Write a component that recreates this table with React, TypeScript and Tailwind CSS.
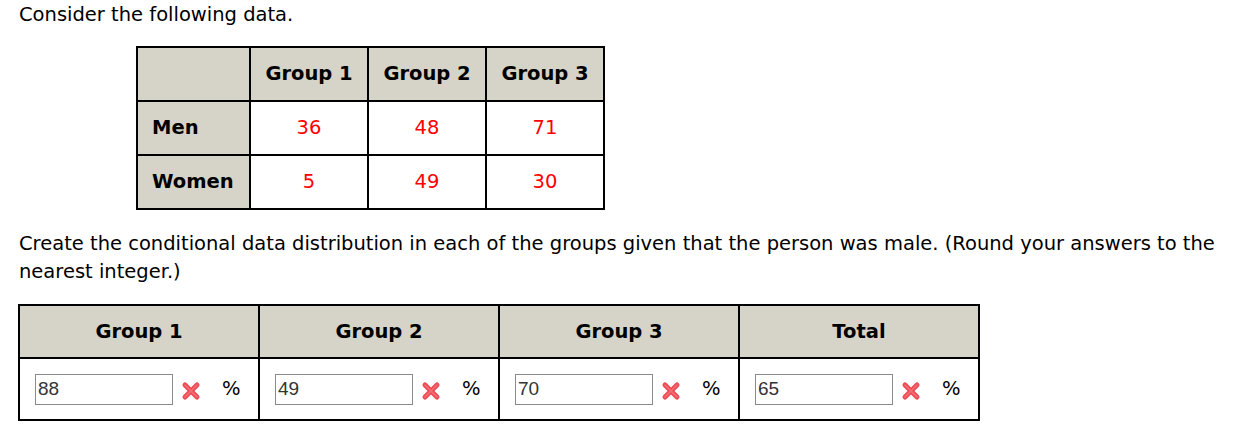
import React from "react";

const Cross = () => (
  <svg width="20" height="20" viewBox="0 0 20 20" className="shrink-0">
    <path d="M4 4 L16 16 M16 4 L4 16" stroke="#ee4b55" strokeWidth="5" strokeLinecap="round" />
    <path d="M4 4 L16 16 M16 4 L4 16" stroke="#f98a90" strokeWidth="1.5" strokeLinecap="round" opacity="0.6" />
  </svg>
);

const AnswerCell = ({ value }: { value: string }) => (
  <td className="border-2 border-black h-[62px] pl-[15px]">
    <div className="flex items-center">
      <input
        readOnly
        value={value}
        className="w-[138px] h-[31px] border border-[#8a8a8a] px-[2px] text-[19px] text-[#333] font-['Liberation_Sans',Arial,sans-serif] outline-none"
      />
      <span className="ml-[8px] mt-[4px]"><Cross /></span>
      <span className="ml-[21px] text-black">%</span>
    </div>
  </td>
);

export default function App() {
  const head = "bg-[#d6d3c9] border-2 border-black font-bold";
  const cell = "border-2 border-black text-center text-[#ff0000]";
  return (
    <div className="w-[1236px] h-[439px] bg-white text-black font-['DejaVu_Sans',Verdana,sans-serif] text-[19.5px] pl-[19px] pt-[1px]">
      <p className="leading-[28px]">Consider the following data.</p>
      <table className="ml-[117px] mt-[17px] border-collapse">
        <tbody>
          <tr className="h-[54px]">
            <td className={head + " w-[113px]"}></td>
            <td className={head + " w-[118px] text-center"}>Group 1</td>
            <td className={head + " w-[118px] text-center"}>Group 2</td>
            <td className={head + " w-[118px] text-center"}>Group 3</td>
          </tr>
          <tr className="h-[54px]">
            <td className={head + " pl-[14px]"}>Men</td>
            <td className={cell}>36</td>
            <td className={cell}>48</td>
            <td className={cell}>71</td>
          </tr>
          <tr className="h-[54px]">
            <td className={head + " pl-[14px]"}>Women</td>
            <td className={cell}>5</td>
            <td className={cell}>49</td>
            <td className={cell}>30</td>
          </tr>
        </tbody>
      </table>
      <p className="mt-[20px] leading-[28px] w-[1210px]">
        Create the conditional data distribution in each of the groups given that the person was male. (Round your answers to the nearest integer.)
      </p>
      <table className="-ml-[1px] mt-[18px] border-collapse">
        <tbody>
          <tr className="h-[53px]">
            <td className={head + " w-[240px] text-center"}>Group 1</td>
            <td className={head + " w-[240px] text-center"}>Group 2</td>
            <td className={head + " w-[240px] text-center"}>Group 3</td>
            <td className={head + " w-[240px] text-center"}>Total</td>
          </tr>
          <tr>
            <AnswerCell value="88" />
            <AnswerCell value="49" />
            <AnswerCell value="70" />
            <AnswerCell value="65" />
          </tr>
        </tbody>
      </table>
    </div>
  );
}
